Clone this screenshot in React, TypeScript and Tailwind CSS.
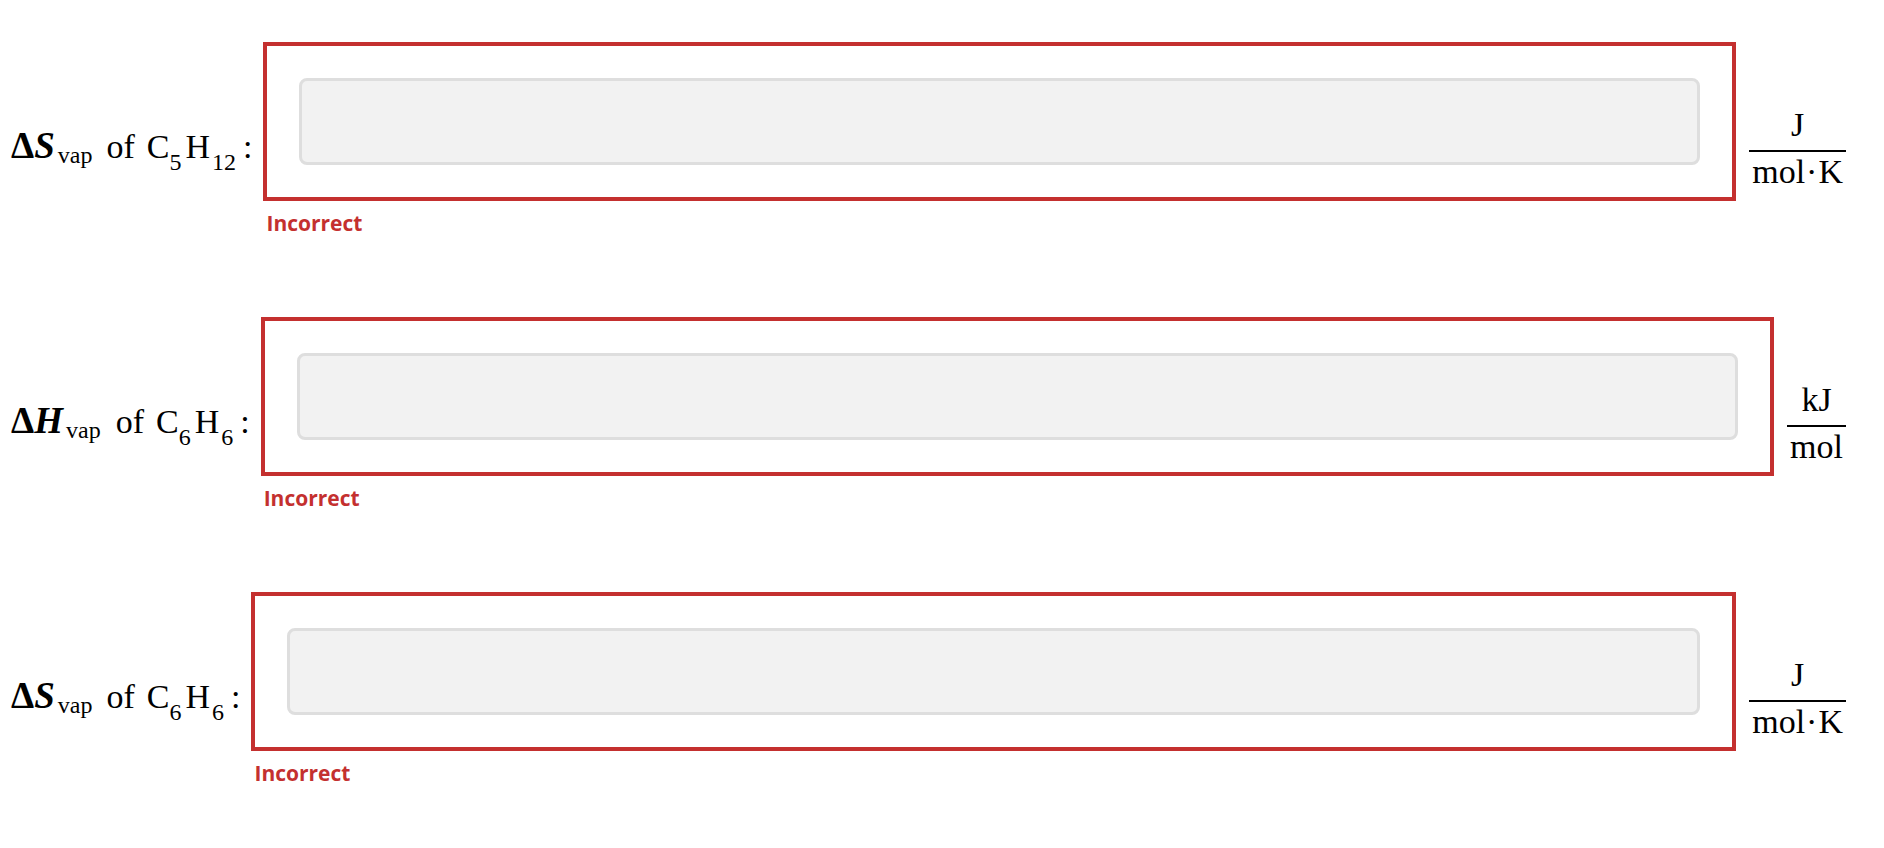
import React from "react";

const serif = "font-['Liberation_Serif',serif]";

const SubText = ({ children }: { children: React.ReactNode }) => (
  <span className="text-[24px] align-[-5px] ml-[3px]">{children}</span>
);

const SubNum = ({ children, className = "" }: { children: React.ReactNode; className?: string }) => (
  <span className={`text-[24px] align-[-12px] ${className}`}>{children}</span>
);

const Fraction = ({ top, bottom }: { top: React.ReactNode; bottom: React.ReactNode }) => (
  <div className={`${serif} ml-[13px] mt-[66px] flex flex-col items-stretch text-[34px] text-black`}>
    <div className="leading-[34px] pb-[8px] text-center px-[3px]">{top}</div>
    <div className="h-[2px] bg-black" />
    <div className="leading-[34px] pt-[3px] text-center px-[3px] whitespace-nowrap">{bottom}</div>
  </div>
);

const AnswerRow = ({ label, units }: { label: React.ReactNode; units: React.ReactNode }) => (
  <div className="flex items-start">
    <div className={`${serif} mt-[84px] text-[34px] leading-[40px] text-black whitespace-nowrap`}>{label}</div>
    <div className="ml-[11px] flex-1 flex flex-col">
      <div className="border-4 border-[#c4302f] bg-white p-[32px]">
        <input className="block w-full h-[87px] rounded-[8px] border-[3px] border-[#dedede] bg-[#f2f2f2] outline-none" />
      </div>
      <div className="mt-[8px] ml-[3px] font-['Open_Sans',sans-serif] font-bold text-[21px] leading-[28px] text-[#c4302f]">
        Incorrect
      </div>
    </div>
    {units}
  </div>
);

const Formula = ({ q, c, h }: { q: string; c: string; h: string }) => (
  <>
    <span className="font-bold text-[37px]">Δ</span>
    <span className="font-bold italic text-[37px]">{q}</span>
    <SubText>vap</SubText>
    <span className={q === "H" ? "ml-[15px]" : "ml-[14px]"}>of</span>
    <span className="ml-[12px]">C</span>
    <SubNum>{c}</SubNum>
    <span className="ml-[4px]">H</span>
    <SubNum className="ml-[2px]">{h}</SubNum>
    <span className="ml-[7px]">:</span>
  </>
);

export default function App() {
  return (
    <div className="min-h-screen bg-white pt-[42px] pl-[11px] pr-[38px] flex flex-col gap-[80px]">
      <AnswerRow
        label={<Formula q="S" c="5" h="12" />}
        units={<Fraction top="J" bottom={<>mol<span className="mx-[1px]">·</span>K</>} />}
      />
      <AnswerRow
        label={<Formula q="H" c="6" h="6" />}
        units={<Fraction top="kJ" bottom="mol" />}
      />
      <AnswerRow
        label={<Formula q="S" c="6" h="6" />}
        units={<Fraction top="J" bottom={<>mol<span className="mx-[1px]">·</span>K</>} />}
      />
    </div>
  );
}
